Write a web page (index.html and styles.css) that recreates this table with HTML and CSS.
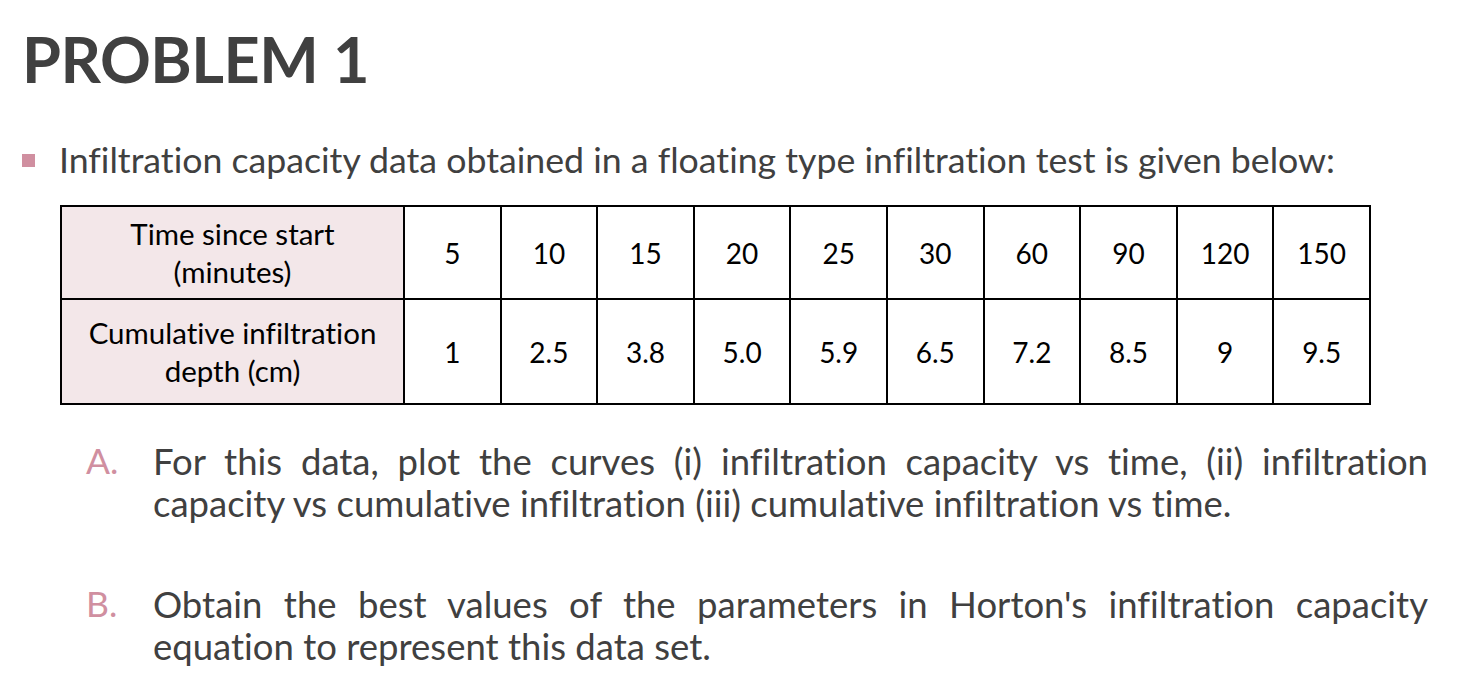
FILE: index.html
```html
<!DOCTYPE html>
<html lang="en">
<head>
    <meta charset="UTF-8">
    <title>Problem 1</title>
    <link rel="stylesheet" href="styles.css">
</head>
<body>
    <div class="slide">
        <h1>PROBLEM 1</h1>

        <div class="bullet">
            <span class="square"></span>
            <p>Infiltration capacity data obtained in a floating type infiltration test is given below:</p>
        </div>

        <table class="data">
            <tr>
                <th>Time since start<br>(minutes)</th>
                <td>5</td><td>10</td><td>15</td><td>20</td><td>25</td>
                <td>30</td><td>60</td><td>90</td><td>120</td><td>150</td>
            </tr>
            <tr class="tall">
                <th>Cumulative infiltration<br>depth (cm)</th>
                <td>1</td><td>2.5</td><td>3.8</td><td>5.0</td><td>5.9</td>
                <td>6.5</td><td>7.2</td><td>8.5</td><td>9</td><td>9.5</td>
            </tr>
        </table>

        <ol class="tasks">
            <li>
                <span class="mark">A.</span>
                <p>For this data, plot the curves (i) infiltration capacity vs time, (ii) infiltration capacity vs cumulative infiltration (iii) cumulative infiltration vs time.</p>
            </li>
            <li>
                <span class="mark">B.</span>
                <p>Obtain the best values of the parameters in Horton's infiltration capacity equation to represent this data set.</p>
            </li>
        </ol>
    </div>
</body>
</html>
```

FILE: styles.css
```css
* {
    box-sizing: border-box;
}

body {
    margin: 0;
    background-color: #fff;
    color: #404040;
    font-family: 'Lato', sans-serif;
    font-variant-ligatures: none;
}

.slide {
    width: 1458px;
    height: 700px;
    padding: 22px 0 0 22px;
    overflow: hidden;
}

h1 {
    margin: 0;
    font-size: 63px;
    font-weight: bold;
    line-height: 74px;
    letter-spacing: -0.5px;
}

.bullet {
    display: flex;
    align-items: center;
    gap: 24px;
    margin-top: 42px;
}

.square {
    width: 13px;
    height: 13px;
    flex: 0 0 13px;
    background-color: #d08fa0;
}

.bullet p {
    margin: 0;
    font-size: 35.7px;
    line-height: 44px;
}

.data {
    border-collapse: collapse;
    margin: 23px 0 0 38px;
    width: 1311px;
    color: #000;
    font-size: 28px;
    table-layout: fixed;
}

.data th,
.data td {
    border: 2px solid #000;
    text-align: center;
    font-weight: normal;
    line-height: 38px;
    padding: 0;
    height: 93px;
}

.data th {
    width: 343px;
    font-size: 29.5px;
    background-color: #f3e7e9;
}

.data .tall th,
.data .tall td {
    height: 105px;
}

.tasks {
    list-style: none;
    margin: 35px 0 0 64px;
    padding: 0;
    width: 1342px;
}

.tasks li {
    display: flex;
    margin-bottom: 59px;
}

.mark {
    flex: 0 0 67px;
    color: #d08fa0;
    font-size: 35.5px;
    line-height: 42px;
}

.tasks p {
    margin: 0;
    flex: 1;
    font-size: 36.5px;
    line-height: 42px;
    text-align: justify;
}
```
